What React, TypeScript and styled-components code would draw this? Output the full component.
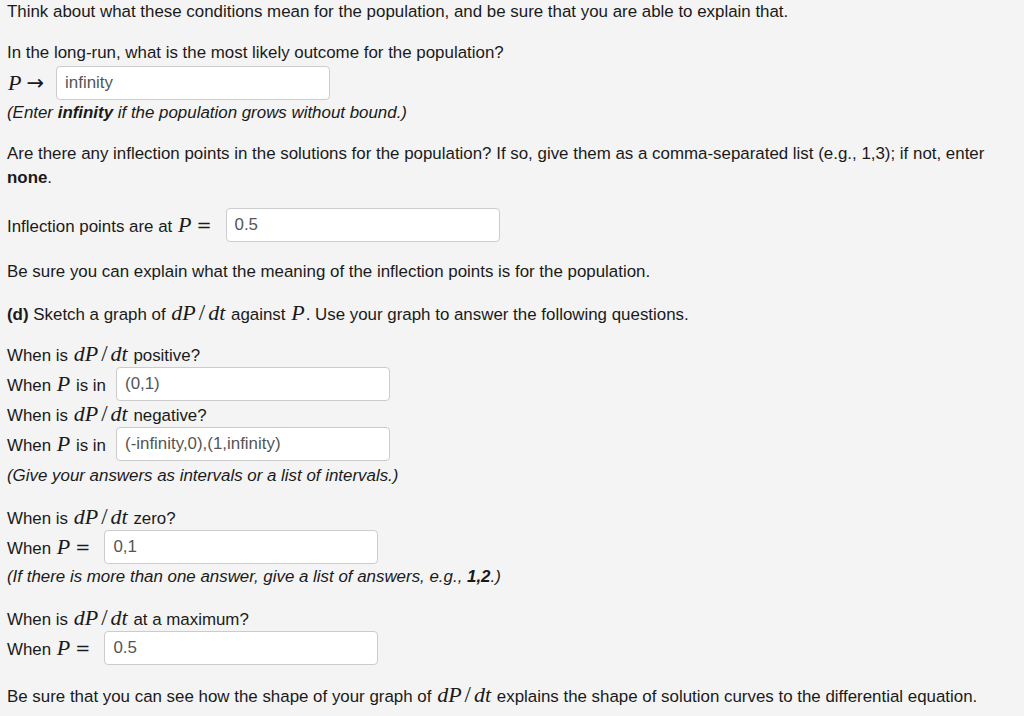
import React from "react";
import styled, { createGlobalStyle } from "styled-components";

const GlobalStyle = createGlobalStyle`
  html, body {
    margin: 0;
    padding: 0;
    background: #f4f4f4;
  }
  body {
    font-family: "Liberation Sans", Arial, sans-serif;
    font-size: 16.9px;
    color: #1a1a1a;
  }
`;

const Page = styled.div`
  padding: 0 7px;
  width: 1010px;
`;

const Section = styled.div<{ $gap?: number }>`
  margin-top: ${(p) => (p.$gap ?? 17)}px;
  &:first-child {
    margin-top: 0;
  }
`;

const Line = styled.div`
  line-height: 24px;
  height: 24px;
  white-space: nowrap;
`;

const Hint = styled.div<{ $shift?: number }>`
  line-height: 24px;
  font-style: italic;
  margin-top: ${(p) => p.$shift ?? 0}px;
`;

const Row = styled.div`
  display: flex;
  align-items: center;
  height: 36px;
  white-space: nowrap;
`;

const Label = styled.span`
  margin-right: 10px;
`;

const AnswerBox = styled.div`
  box-sizing: border-box;
  width: 274px;
  height: 34px;
  background: #fff;
  border: 1px solid #ccc;
  border-radius: 4px;
  padding: 0 8px;
  display: flex;
  align-items: center;
  color: #555;
  font-size: 16.9px;
`;

const MathVar = styled.span`
  font-family: "Liberation Serif", "Times New Roman", serif;
  font-style: italic;
  font-size: 22px;
  margin: 0 1px;
`;

const MathOp = styled.span`
  font-family: "DejaVu Serif", "Liberation Serif", serif;
  font-size: 18px;
  margin: 0 4px;
`;

const Arrow = styled.span`
  font-family: "DejaVu Sans", sans-serif;
  font-size: 21px;
  margin: 0 2px 0 4px;
`;

const MathSlash = styled.span`
  font-family: "Liberation Serif", "Times New Roman", serif;
  font-size: 23px;
  margin: 0 2px;
`;

const Strong = styled.b`
  font-weight: 700;
`;

const DPdt = () => (
  <>
    <MathVar>dP</MathVar>
    <MathSlash>/</MathSlash>
    <MathVar>dt</MathVar>
  </>
);

const P = () => <MathVar>P</MathVar>;

const App = () => {
  return (
    <Page>
      <GlobalStyle />
      <Section>
        <Line>
          Think about what these conditions mean for the population, and be sure that you are able to explain that.
        </Line>
      </Section>

      <Section>
        <Line>In the long-run, what is the most likely outcome for the population?</Line>
        <Row>
          <Label>
            <P />
            <Arrow>→</Arrow>
          </Label>
          <AnswerBox>infinity</AnswerBox>
        </Row>
        <Hint>
          (Enter <Strong>infinity</Strong> if the population grows without bound.)
        </Hint>
      </Section>

      <Section>
        <Line>
          Are there any inflection points in the solutions for the population? If so, give them as a
          comma-separated list (e.g., 1,3); if not, enter
        </Line>
        <Line>
          <Strong>none</Strong>.
        </Line>
      </Section>

      <Section>
        <Row>
          <Label>
            Inflection points are at <P />
            <MathOp>=</MathOp>
          </Label>
          <AnswerBox>0.5</AnswerBox>
        </Row>
      </Section>

      <Section>
        <Line>Be sure you can explain what the meaning of the inflection points is for the population.</Line>
      </Section>

      <Section>
        <Line>
          <Strong>(d)</Strong> Sketch a graph of <DPdt /> against <P />. Use your graph to answer the
          following questions.
        </Line>
      </Section>

      <Section>
        <Line>
          When is <DPdt /> positive?
        </Line>
        <Row>
          <Label>
            When <P /> is in
          </Label>
          <AnswerBox>(0,1)</AnswerBox>
        </Row>
        <Line>
          When is <DPdt /> negative?
        </Line>
        <Row>
          <Label>
            When <P /> is in
          </Label>
          <AnswerBox>(-infinity,0),(1,infinity)</AnswerBox>
        </Row>
        <Hint $shift={2}>(Give your answers as intervals or a list of intervals.)</Hint>
      </Section>

      <Section>
        <Line>
          When is <DPdt /> zero?
        </Line>
        <Row>
          <Label>
            When <P />
            <MathOp>=</MathOp>
          </Label>
          <AnswerBox>0,1</AnswerBox>
        </Row>
        <Hint>
          (If there is more than one answer, give a list of answers, e.g., <Strong>1,2</Strong>.)
        </Hint>
      </Section>

      <Section>
        <Line>
          When is <DPdt /> at a maximum?
        </Line>
        <Row>
          <Label>
            When <P />
            <MathOp>=</MathOp>
          </Label>
          <AnswerBox>0.5</AnswerBox>
        </Row>
      </Section>

      <Section>
        <Line>
          Be sure that you can see how the shape of your graph of <DPdt /> explains the shape of solution
          curves to the differential equation.
        </Line>
      </Section>
    </Page>
  );
};

export default App;
